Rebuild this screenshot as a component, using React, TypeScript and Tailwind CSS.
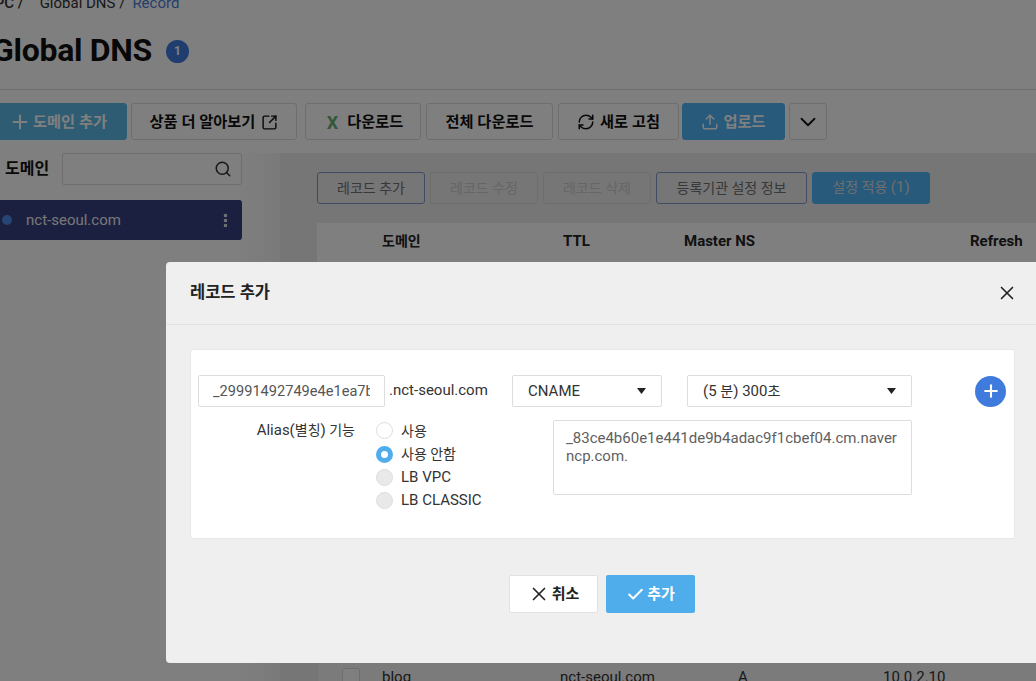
import { Check, ChevronDown, MoreVertical, Plus, RefreshCw, Search, SquareArrowOutUpRight, Upload, X } from 'lucide-react';

const FONT = 'font-[Roboto,"Noto_Sans_CJK_KR",sans-serif]';

function ToolButton({ className, children }: { className: string; children: React.ReactNode }) {
  return (
    <button className={`flex h-[37px] shrink-0 items-center justify-center rounded-[3px] border pt-[1px] text-[15.25px] font-bold ${className}`}>
      {children}
    </button>
  );
}

function RecordButton({ className, children }: { className: string; children: React.ReactNode }) {
  return (
    <button className={`flex h-8 shrink-0 items-center justify-center rounded-[3px] border text-sm ${className}`}>
      {children}
    </button>
  );
}

function Radio({ label, state, latin }: { label: string; state: 'off' | 'on' | 'disabled'; latin?: boolean }) {
  return (
    <label className={`flex h-[23.4px] items-center gap-[8px] pl-[1px] text-[#333] ${latin ? 'text-[15px]' : 'text-sm'}`}>
      {state === 'on' && (
        <span className="h-[17px] w-[17px] rounded-full border-[5px] border-[#4fadec] bg-white" />
      )}
      {state === 'off' && <span className="h-[17px] w-[17px] rounded-full border border-[#ddd] bg-white" />}
      {state === 'disabled' && <span className="h-[17px] w-[17px] rounded-full border border-[#ddd] bg-[#e9e9e9]" />}
      {label}
    </label>
  );
}

function Caret() {
  return (
    <svg width="9" height="6" viewBox="0 0 9 6" className="text-[#222]">
      <path d="M0 0h9L4.5 6z" fill="currentColor" />
    </svg>
  );
}

export default function App() {
  return (
    <div className={`relative h-[681px] w-[1036px] overflow-hidden bg-white text-[#111] ${FONT}`}>
      {/* page behind the dialog, scrolled a little up and to the right */}
      <div className="-mt-[7px] -ml-[7px] w-[1100px]">
        <div className="flex h-5 items-center text-[15px] text-[#333]">
          <span className="-ml-[8px] font-medium">VPC /</span>
          <span className="ml-[16px]">Global DNS /</span>
          <span className="ml-[7px] text-[#4a7fd4]">Record</span>
        </div>
        <div className="mt-[16px] flex h-[42px] items-center">
          <h1 className="-ml-[1px] text-[32px] font-bold tracking-[-0.3px] text-[#111]">Global DNS</h1>
          <span className="ml-[14px] mt-[2px] flex h-[23px] w-[23px] items-center justify-center rounded-full bg-[#3f7bdc] text-xs font-bold text-white">
            1
          </span>
        </div>
        <div className="mt-[18px] border-t border-[#ddd]" />

        <div className="mt-[13px] flex">
          <ToolButton className="w-[134px] gap-[2px] border-[#5cb8e6] bg-[#5cb8e6] pr-[4px] text-white">
            <Plus size={22} strokeWidth={2.2} />
            도메인 추가
          </ToolButton>
          <ToolButton className="ml-[4px] w-[166px] gap-[6px] border-[#ddd] bg-white">
            상품 더 알아보기
            <SquareArrowOutUpRight size={17} strokeWidth={2} />
          </ToolButton>
          <ToolButton className="ml-[8px] w-[116px] gap-[9px] border-[#ddd] bg-white pl-[4px]">
            <span className="text-[18px] font-bold text-[#6fae74]">X</span>
            다운로드
          </ToolButton>
          <ToolButton className="ml-[5px] w-[127px] border-[#ddd] bg-white">전체 다운로드</ToolButton>
          <ToolButton className="ml-[5px] w-[121px] gap-[5px] border-[#ddd] bg-white">
            <RefreshCw size={18} strokeWidth={2} />
            새로 고침
          </ToolButton>
          <ToolButton className="ml-[3px] w-[103px] gap-[4px] border-[#50b4f8] bg-[#50b4f8] text-white">
            <Upload size={18} strokeWidth={2} />
            업로드
          </ToolButton>
          <ToolButton className="ml-[4px] w-[38px] border-[#ddd] bg-white">
            <ChevronDown size={26} strokeWidth={1.7} />
          </ToolButton>
        </div>

        <div className="mt-[13px] flex bg-[linear-gradient(to_right,#fff_240px,#f4f4f4_287px)]">
          <aside className="w-[287px] shrink-0 pr-[38px]">
            <div className="flex items-center">
              <span className="ml-[12px] w-[45px] shrink-0 whitespace-nowrap text-base font-bold">도메인</span>
              <div className="ml-[12px] flex h-8 w-[180px] shrink-0 items-center justify-end rounded-[2px] border border-[#ddd] pr-[9px]">
                <Search size={18} strokeWidth={2} className="text-[#333]" />
              </div>
            </div>
            <div className="mt-[15px] flex h-10 items-center rounded-[3px] bg-[#363f80] pr-[8px] text-[#eee]">
              <span className="ml-[9px] h-[10px] w-[10px] rounded-full bg-[#4f8be8]" />
              <span className="ml-[14px] flex-1 text-[15px]">nct-seoul.com</span>
              <MoreVertical size={17} strokeWidth={3} />
            </div>
          </aside>
          <main className="h-[540px] flex-1 bg-[#ececec] pl-[37px] pt-[19px]">
            <div className="flex gap-[5px]">
              <RecordButton className="w-[108px] border-[#7f9ac8] text-[#707070]">레코드 추가</RecordButton>
              <RecordButton className="w-[108px] border-[#ddd] text-[#ccc]">레코드 수정</RecordButton>
              <RecordButton className="w-[108px] border-[#ddd] text-[#ccc]">레코드 삭제</RecordButton>
              <RecordButton className="w-[151px] border-[#7f9ac8] text-[#707070]">등록기관 설정 정보</RecordButton>
              <RecordButton className="w-[118px] border-[#50b4f8] bg-[#50b4f8] text-[#ddd]">
                <span>
                  설정 적용 <span className="text-[15px]">(1)</span>
                </span>
              </RecordButton>
            </div>
            <div className="mt-[19px] flex h-[39px] items-center bg-white pb-[3px] text-[15px] font-bold text-[#222]">
              <span className="ml-[65px] w-[181px] text-sm">도메인</span>
              <span className="w-[121px]">TTL</span>
              <span className="w-[286px]">Master NS</span>
              <span>Refresh</span>
            </div>
            <div className="h-[440px] border-l border-[#e6e6e6] bg-[#f6f6f6] pt-[395px]">
              <div className="flex h-10 items-center text-[15px] text-[#333]">
                <span className="ml-[24px] mr-[1px] h-[18px] w-[18px] rounded-[2px] border border-[#ddd] bg-white" />
                <span className="ml-[21px] w-[178px]">blog</span>
                <span className="w-[178px]">nct-seoul.com</span>
                <span className="w-[145px]">A</span>
                <span>10.0.2.10</span>
              </div>
            </div>
          </main>
        </div>
      </div>

      {/* dimmed backdrop and dialog */}
      <div className="absolute inset-0 bg-black/50" />
      <div className="absolute left-[166px] top-[262px] h-[401px] w-[900px] rounded-[4px] bg-[#efefef]">
        <header className="flex h-[63px] items-center justify-between border-b border-[#e2e2e2] pl-[24px] pr-[21px]">
          <h2 className="pt-[1px] text-[16.5px] font-bold text-[#222]">레코드 추가</h2>
          <span className="mr-[27px]">
            <X size={22} strokeWidth={1.8} className="text-[#222]" />
          </span>
        </header>
        <section className="ml-[24px] mt-[24px] h-[190px] w-[825px] rounded-[3px] border border-[#e8e8e8] bg-white pl-[7px] pt-[25px] text-sm">
          <div className="flex items-center">
            <input
              readOnly
              value="_29991492749e4e1ea7b8c04f"
              className="h-8 w-[187px] rounded-[2px] border border-[#ddd] px-[14px] text-[14.6px] text-[#555] outline-none"
            />
            <span className="ml-[4px] w-[123px] text-[15px] text-[#333]">.nct-seoul.com</span>
            <div className="flex h-8 w-[150px] items-center justify-between rounded-[2px] border border-[#ddd] pl-[15px] pr-[15px] text-[15px] text-[#333]">
              <span className="pt-[1px]">CNAME</span>
              <Caret />
            </div>
            <div className="ml-[25px] flex h-8 w-[225px] items-center justify-between rounded-[2px] border border-[#ddd] pl-[15px] pr-[15px] text-[15px] text-[#333]">
              <span className="pt-[1px]">
                (5 <span className="text-sm">분</span>) 300<span className="text-sm">초</span>
              </span>
              <Caret />
            </div>
            <button className="ml-[63px] flex h-[31px] w-[31px] items-center justify-center rounded-full bg-[#3f7bdc] text-white">
              <Plus size={20} strokeWidth={2.5} />
            </button>
          </div>
          <div className="mt-[13px] flex items-start">
            <span className="w-[157px] text-right text-[#333]">
              <span className="text-[15px]">Alias(</span>별칭<span className="text-[15px]">)</span> 기능
            </span>
            <div className="-mt-[1px] ml-[20px] flex w-[178px] flex-col">
              <Radio label="사용" state="off" />
              <Radio label="사용 안함" state="on" />
              <Radio label="LB VPC" state="disabled" latin />
              <Radio label="LB CLASSIC" state="disabled" latin />
            </div>
            <textarea
              readOnly
              value="_83ce4b60e1e441de9b4adac9f1cbef04.cm.naverncp.com."
              className="h-[75px] w-[359px] resize-none overflow-hidden rounded-[2px] border border-[#ddd] px-[12px] py-[8px] text-[15px] leading-[18px] text-[#5f5f5f] outline-none"
            />
          </div>
        </section>
        <div className="mt-[36px] flex justify-start gap-[8px] pl-[343px]">
          <button className="flex h-[38px] w-[89px] items-center justify-center gap-[2px] rounded-[2px] border border-[#e2e2e2] bg-white text-[15px] font-bold text-[#222]">
            <X size={22} strokeWidth={1.8} />
            취소
          </button>
          <button className="flex h-[38px] w-[89px] items-center justify-center gap-[2px] rounded-[2px] bg-[#4fadec] text-[15px] font-bold text-white">
            <Check size={19} strokeWidth={2.5} />
            추가
          </button>
        </div>
      </div>
    </div>
  );
}
